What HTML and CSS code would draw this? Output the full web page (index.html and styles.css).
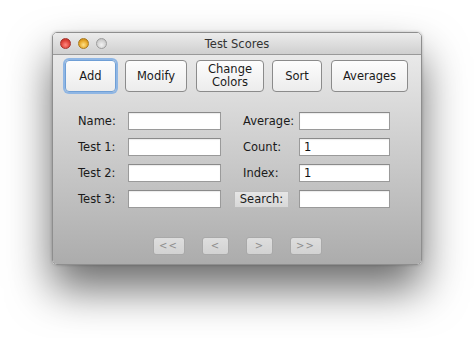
FILE: index.html
```html
<!DOCTYPE html>
<html>
<head>
<meta charset="utf-8">
<title>Test Scores</title>
<link rel="stylesheet" href="styles.css">
</head>
<body>
<div class="window">
  <div class="titlebar">
    <div class="lights">
      <span class="light red"></span>
      <span class="light yellow"></span>
      <span class="light gray"></span>
    </div>
    <div class="title">Test Scores</div>
  </div>
  <div class="content">
    <div class="toolbar">
      <button class="btn btn-add focused">Add</button>
      <button class="btn btn-modify">Modify</button>
      <button class="btn btn-change">Change<br>Colors</button>
      <button class="btn btn-sort">Sort</button>
      <button class="btn btn-avg">Averages</button>
    </div>
    <div class="form">
      <label class="lbl">Name:</label>
      <div class="field"></div>
      <span></span>
      <label class="lbl lbl-r">Average:</label>
      <div class="field field-r"></div>

      <label class="lbl">Test 1:</label>
      <div class="field"></div>
      <span></span>
      <label class="lbl lbl-r">Count:</label>
      <div class="field field-r">1</div>

      <label class="lbl">Test 2:</label>
      <div class="field"></div>
      <span></span>
      <label class="lbl lbl-r">Index:</label>
      <div class="field field-r">1</div>

      <label class="lbl">Test 3:</label>
      <div class="field"></div>
      <span></span>
      <div class="search-cell"><button class="search">Search:</button></div>
      <div class="field field-r"></div>
    </div>
    <div class="nav">
      <button class="navbtn wide">&lt;&lt;</button>
      <button class="navbtn">&lt;</button>
      <button class="navbtn">&gt;</button>
      <button class="navbtn wide">&gt;&gt;</button>
    </div>
  </div>
</div>
</body>
</html>
```

FILE: styles.css
```css
html, body {
  margin: 0;
  padding: 0;
  background: #ffffff;
}
body {
  width: 474px;
  height: 338px;
  overflow: hidden;
  font-family: "DejaVu Sans", "Liberation Sans", sans-serif;
  font-size: 11.5px;
  color: #1e1e1e;
}
.window {
  box-sizing: border-box;
  margin: 32px 0 0 52px;
  width: 370px;
  height: 233px;
  border: 1px solid #8e8e8e;
  border-radius: 5px;
  overflow: hidden;
  box-shadow: 0 24px 44px rgba(0, 0, 0, 0.58), 0 0 3px rgba(0,0,0,0.25);
  display: flex;
  flex-direction: column;
}
.titlebar {
  position: relative;
  height: 22px;
  box-sizing: border-box;
  background: linear-gradient(#ececec, #cfcfcf);
  border-bottom: 1px solid #999999;
  display: flex;
  align-items: center;
  justify-content: center;
}
.lights {
  position: absolute;
  left: 7px;
  top: 5px;
  display: flex;
  gap: 7px;
}
.light {
  width: 11px;
  height: 11px;
  border-radius: 50%;
  box-sizing: border-box;
}
.red {
  background: radial-gradient(circle at 50% 65%, #ff8a80 0%, #e0443a 55%, #b02a20 100%);
  border: 1px solid #a5342c;
}
.yellow {
  background: radial-gradient(circle at 50% 65%, #ffe28a 0%, #e8a92a 55%, #b87a10 100%);
  border: 1px solid #a87a20;
}
.gray {
  background: radial-gradient(circle at 50% 65%, #f2f2f2 0%, #d0d0d0 60%, #b5b5b5 100%);
  border: 1px solid #9c9c9c;
}
.title {
  color: #333333;
  font-size: 11.5px;
  padding-top: 1px;
}
.content {
  flex: 1;
  background: linear-gradient(#e9e9e9 0%, #d6d6d6 30%, #bbbbbb 75%, #acacac 100%);
  display: flex;
  flex-direction: column;
}
.toolbar {
  display: flex;
  gap: 9px;
  padding: 5px 0 0 12px;
}
.btn {
  box-sizing: border-box;
  height: 32px;
  border: 1px solid #8b8b8b;
  border-radius: 4px;
  background: linear-gradient(#fdfdfd, #ececec);
  font-family: inherit;
  font-size: 11.5px;
  color: #1a1a1a;
  line-height: 13px;
  padding: 0;
}
.btn-add { width: 51px; }
.btn-modify { width: 62px; }
.btn-change { width: 68px; margin-right: -1px; }
.btn-sort { width: 50px; }
.btn-avg { width: 77px; }
.focused {
  border: 1px solid #6f9fd6;
  box-shadow: 0 0 0 2px #8fb6e4;
}
.form {
  margin: 20px 0 0 25px;
  display: grid;
  grid-template-columns: 50px 93px 13px 65px 91px;
  grid-auto-rows: 18px;
  row-gap: 8px;
  align-items: center;
}
.lbl {
  color: #1a1a1a;
  white-space: nowrap;
}
.lbl-r {
  padding-left: 9px;
}
.field {
  box-sizing: border-box;
  height: 18px;
  background: #ffffff;
  border: 1px solid #9a9a9a;
  border-top-color: #8a8a8a;
  box-shadow: inset 0 1px 1px rgba(0,0,0,0.08);
  padding-left: 4px;
  line-height: 16px;
  color: #111;
}
.search-cell {
  display: flex;
  align-items: center;
}
.search {
  box-sizing: border-box;
  width: 55px;
  height: 17px;
  border: 1px solid #bdbdbd;
  background: linear-gradient(#e6e6e6, #d8d8d8);
  font-family: inherit;
  font-size: 11.5px;
  color: #1a1a1a;
  padding: 0;
  line-height: 15px;
}
.nav {
  margin-top: 29px;
  display: flex;
  justify-content: center;
  gap: 17px;
}
.navbtn {
  box-sizing: border-box;
  width: 27px;
  height: 18px;
  border: 1px solid #a9a9a9;
  border-radius: 3px;
  background: linear-gradient(#dedede, #d2d2d2);
  color: #8e8e8e;
  font-family: inherit;
  font-size: 10px;
  padding: 0;
  line-height: 16px;
}
.navbtn.wide { width: 32px; letter-spacing: 1px; }
```
